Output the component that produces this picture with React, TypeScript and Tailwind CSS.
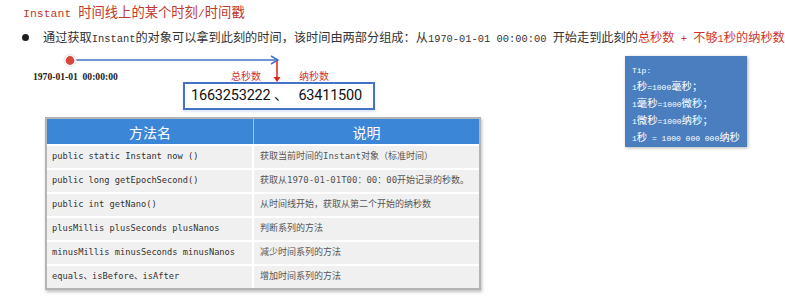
import React from "react";

const cjk = "font-['Noto_Sans_CJK_SC',sans-serif]";

// latin run in a half-width mono face, like the slide's SimSun
const L: React.FC<{ className?: string; children: React.ReactNode }> = ({ className = "", children }) => (
  <span className={`font-['Liberation_Mono','Noto_Sans_CJK_SC',monospace] whitespace-pre leading-none ${className}`}>{children}</span>
);

const rows: [string, string][] = [
  ["public static Instant now ()", "获取当前时间的Instant对象（标准时间）"],
  ["public long getEpochSecond()", "获取从1970-01-01T00：00：00开始记录的秒数。"],
  ["public int getNano()", "从时间线开始，获取从第二个开始的纳秒数"],
  ["plusMillis plusSeconds plusNanos", "判断系列的方法"],
  ["minusMillis minusSeconds minusNanos", "减少时间系列的方法"],
  ["equals、isBefore、isAfter", "增加时间系列的方法"],
];

const Timeline: React.FC = () => {
  return (
    <div className="relative h-[72px] w-[482px]">
      <svg className="absolute inset-0" width="482" height="72" viewBox="0 0 482 72">
        <line x1="75" y1="15" x2="277" y2="15" stroke="#4472c4" strokeWidth="1.5" />
        <polyline points="271,11 278,15 271,19" fill="none" stroke="#4472c4" strokeWidth="1.5" />
        <line x1="277" y1="16" x2="277" y2="33" stroke="#e0201b" strokeWidth="1.5" />
        <polygon points="273.5,32 280.5,32 277,37" fill="#e0201b" />
        <circle cx="70" cy="15.5" r="6.5" fill="#e6e6e6" />
        <circle cx="70" cy="15.5" r="5" fill="#d8473a" stroke="#fff" strokeWidth="1.2" />
      </svg>
      <div className="absolute left-[33px] top-[26px] text-[9.6px] leading-[12px] font-semibold text-[#222] font-['Liberation_Serif',serif] whitespace-pre">
        1970-01-01  00:00:00
      </div>
      <div className={`absolute left-[231px] top-[25px] text-[10px] leading-[12px] text-[#d0342c] ${cjk}`}>总秒数</div>
      <div className={`absolute left-[299px] top-[25px] text-[10px] leading-[12px] text-[#d0342c] ${cjk}`}>纳秒数</div>
      <div className="absolute left-[183px] top-[37px] w-[192px] h-[28px] border-2 border-[#4472c4] bg-white shadow-[0_2px_2px_rgba(120,160,220,0.25)] flex items-center pl-[6px]">
        <span className="text-[14.5px] leading-none text-[#111] font-['Roboto','Noto_Sans_CJK_SC',sans-serif] whitespace-pre tracking-[-0.2px]">
          1663253222 、   63411500
        </span>
      </div>
    </div>
  );
};

const MethodTable: React.FC = () => {
  return (
    <div className="ml-[45px] w-[436px] border-2 border-[#b4b4b4] bg-white shadow-[1px_2px_3px_rgba(0,0,0,0.25)]">
      <div className="flex h-[25px] bg-[#3b86d7] text-white text-[14px] leading-none">
        <div className={`w-[207px] flex items-center justify-center border-r border-[#9cc3ec] ${cjk}`}>方法名</div>
        <div className={`flex-1 flex items-center justify-center ${cjk}`}>说明</div>
      </div>
      {rows.map(([m, d]) => (
        <div key={m} className="flex h-[24px] border-t-2 border-white bg-[#f0f0f0]">
          <div className="w-[207px] flex items-center pl-[5px] border-r-2 border-white text-[8.7px] text-[#333] font-['DejaVu_Sans_Mono','Noto_Sans_CJK_SC',monospace] whitespace-pre">
            {m}
          </div>
          <div className="flex-1 flex items-center pl-[6px] text-[9px] text-[#555] font-['DejaVu_Sans_Mono','Noto_Sans_CJK_SC',monospace] whitespace-nowrap">
            {d}
          </div>
        </div>
      ))}
    </div>
  );
};

const TipLine: React.FC<{ children: React.ReactNode }> = ({ children }) => (
  <div className="h-[17px] leading-[17px]">{children}</div>
);

const TipBox: React.FC = () => {
  const s = "text-[8px]";
  return (
    <div className={`ml-[143px] mt-[11px] w-[122px] h-[91px] bg-[#4a7ebf] shadow-[1px_1px_3px_rgba(0,0,0,0.3)] pl-[7px] pt-[4px] text-white text-[10.4px] whitespace-nowrap overflow-hidden ${cjk}`}>
      <TipLine><L className={s}>Tip:</L></TipLine>
      <TipLine><L className={s}>1</L>秒<L className={s}>=1000</L>毫秒；</TipLine>
      <TipLine><L className={s}>1</L>毫秒<L className={s}>=1000</L>微秒；</TipLine>
      <TipLine><L className={s}>1</L>微秒<L className={s}>=1000</L>纳秒；</TipLine>
      <TipLine><L className={s}>1</L>秒<L className={s}> = 1000 000 000</L>纳秒</TipLine>
    </div>
  );
};

export default function App() {
  return (
    <div className={`w-[785px] h-[304px] bg-white overflow-hidden ${cjk}`}>
      <div className="pl-[23px] pt-[4px] h-[20px] text-[13.3px] leading-[16px] text-[#c0392b] whitespace-nowrap">
        <L className="text-[11.5px]">Instant </L>时间线上的某个时刻<L className="text-[11.5px]">/</L>时间戳
      </div>
      <div className="mt-[9px] h-[16px] flex items-center whitespace-nowrap">
        <div className="ml-[22px] w-[7px] h-[7px] rounded-full bg-[#1f1f1f]" />
        <div className="ml-[14px] text-[12.2px] leading-[16px] text-[#333]">
          通过获取<L className="text-[10.4px]">Instant</L>的对象可以拿到此刻的时间，该时间由两部分组成：从<L className="text-[10.4px]">1970-01-01 00:00:00 </L>开始走到此刻的
          <span className="text-[#d0342c]">
            总秒数<L className="text-[10.4px]"> + </L>不够<L className="text-[10.4px]">1</L>秒的纳秒数
          </span>
        </div>
      </div>
      <div className="flex">
        <div className="flex flex-col w-[482px]">
          <Timeline />
          <MethodTable />
        </div>
        <TipBox />
      </div>
    </div>
  );
}
